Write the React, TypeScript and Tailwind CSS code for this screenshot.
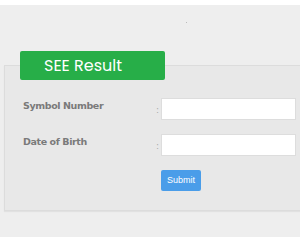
export default function App() {
  return (
    <div className="w-[300px] h-[237px] bg-white overflow-hidden">
      <div className="mt-[5px] h-[232px] bg-[#eeeeee] pt-[51px] pl-[4px] relative">
        <span className="absolute left-[186px] top-[17px] w-[1px] h-[1px] bg-[#bbbbbb]" />
        <div className="relative border border-[#dcdcdc] border-r-0 bg-[#e8e8e8] h-[146px] mt-[9px] shadow-[0_1px_1px_rgba(0,0,0,0.05)]">
          <div className="absolute left-[15px] top-[-15px] w-[145px] h-[29px] bg-[#27ae48] rounded-[2px] flex items-center pl-[24px] text-white text-[16px] font-['Poppins','Open_Sans',sans-serif] leading-none">
            SEE Result
          </div>
          <div className="pt-[32px] pl-[18px] font-['DejaVu_Sans',Verdana,sans-serif] text-[9.5px] tracking-[-0.4px] font-bold text-[#7a7a7a]">
            <div className="flex items-start h-[22px]">
              <span className="w-[133px] mt-[1px]">Symbol Number</span>
              <span className="text-[9px] text-[#aaaaaa] font-normal mt-[6px] w-[5px]">:</span>
              <input className="w-[135px] h-[22px] bg-white border border-[#dddddd] outline-none" />
            </div>
            <div className="flex items-start h-[22px] mt-[14px]">
              <span className="w-[133px] mt-[1px]">Date of Birth</span>
              <span className="text-[9px] text-[#aaaaaa] font-normal mt-[6px] w-[5px]">:</span>
              <input className="w-[135px] h-[22px] bg-white border border-[#dddddd] outline-none" />
            </div>
            <div className="pl-[138px] mt-[14px]">
              <button className="w-[40px] h-[21px] bg-[#4a9de9] rounded-[2px] text-white text-[9px] tracking-normal font-normal font-['Liberation_Sans',Arial,sans-serif]">
                Submit
              </button>
            </div>
          </div>
        </div>
      </div>
    </div>
  )
}
